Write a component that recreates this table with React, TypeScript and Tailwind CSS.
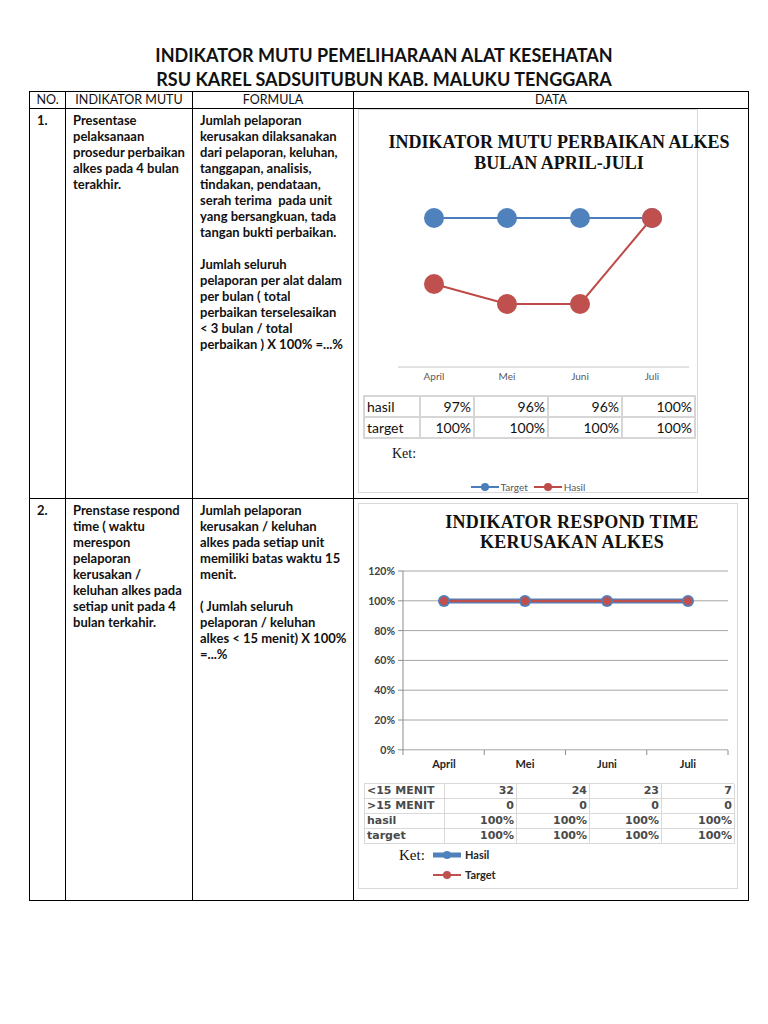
import React from "react";

const months = ["April", "Mei", "Juni", "Juli"];

function LegendMark({ color, thick }: { color: string; thick?: boolean }) {
  return (
    <svg width="28" height="10" className="block">
      <line x1="0" y1="5" x2="28" y2="5" stroke={color} strokeWidth={thick ? 5 : 2} />
      <circle cx="14" cy="5" r="4" fill={color} />
    </svg>
  );
}

function Chart1() {
  const bx = [75, 148, 221, 293];
  const red = [110, 130, 130, 44];
  return (
    <div className="w-[340px] h-[384px] border border-[#d9d9d9] bg-white">
      <div className="w-[400px] pt-[22px] text-center [font-family:'Liberation_Serif',serif] font-bold text-[18px] leading-[21px] text-[#111]">
        <div className="whitespace-nowrap">INDIKATOR MUTU PERBAIKAN ALKES</div>
        <div>BULAN APRIL-JULI</div>
      </div>
      <svg width="338" height="220" className="block">
        <line x1="39" y1="193" x2="330" y2="193" stroke="#d9d9d9" strokeWidth="1.5" />
        <polyline points={bx.map((x) => `${x},44`).join(" ")} fill="none" stroke="#4a7ebb" strokeWidth="2" />
        {bx.map((x) => (
          <circle key={"b" + x} cx={x} cy={44} r={10} fill="#4f81bd" />
        ))}
        <polyline points={bx.map((x, i) => `${x},${red[i]}`).join(" ")} fill="none" stroke="#be4b48" strokeWidth="2" />
        {bx.map((x, i) => (
          <circle key={"r" + x} cx={x} cy={red[i]} r={10} fill="#c0504d" />
        ))}
        {bx.map((x, i) => (
          <text key={"t" + x} x={x} y={206} textAnchor="middle" fontSize="10" fill="#595959" fontFamily="Lato, sans-serif">
            {months[i]}
          </text>
        ))}
      </svg>
      <div className="mt-[1px] ml-[4px] w-[333px] grid grid-cols-[56px_54px_74px_74px_73px] border-l-2 border-t-2 border-[#d6d6d6] text-[14px] leading-[19px] text-[#111]">
        {[
          ["hasil", "97%", "96%", "96%", "100%"],
          ["target", "100%", "100%", "100%", "100%"],
        ].map((row, ri) =>
          row.map((c, ci) => (
            <div
              key={ri + "-" + ci}
              className={
                ci === 0
                  ? "h-[21px] border-r-2 border-b-2 border-[#d6d6d6] pl-[2px]"
                  : "h-[21px] border-r-2 border-b-2 border-[#d6d6d6] pr-[2px] text-right"
              }
            >
              {c}
            </div>
          ))
        )}
      </div>
      <div className="mt-[5px] ml-[33px] h-[20px] [font-family:'Liberation_Serif',serif] text-[14px] leading-[20px] text-[#111]">
        Ket:
      </div>
      <div className="mt-[17px] flex justify-center items-center gap-[6px] text-[10px] leading-[12px] text-[#595959]">
        <div className="flex items-center gap-[2px]">
          <LegendMark color="#4a7ebb" />
          <span>Target</span>
        </div>
        <div className="flex items-center gap-[2px]">
          <LegendMark color="#be4b48" />
          <span>Hasil</span>
        </div>
      </div>
    </div>
  );
}

function Chart2() {
  const ys = [0, 1, 2, 3, 4, 5, 6].map((i) => 19 + i * 29.8);
  const labels = ["120%", "100%", "80%", "60%", "40%", "20%", "0%"];
  const ticks = [44, 125.25, 206.5, 287.75, 369];
  const cx = [85, 166, 248, 329];
  const rows = [
    ["<15 MENIT", "32", "24", "23", "7"],
    [">15 MENIT", "0", "0", "0", "0"],
    ["hasil", "100%", "100%", "100%", "100%"],
    ["target", "100%", "100%", "100%", "100%"],
  ];
  return (
    <div className="w-[380px] h-[386px] border border-[#d9d9d9] bg-white">
      <div className="pt-[8px] pl-[48px] text-center [font-family:'Liberation_Serif',serif] font-bold text-[18px] leading-[20px] tracking-[0.3px] text-[#111]">
        <div className="whitespace-nowrap">INDIKATOR RESPOND TIME</div>
        <div>KERUSAKAN ALKES</div>
      </div>
      <svg width="378" height="228" className="block">
        {ys.map((y, i) => (
          <g key={"g" + i}>
            <line x1="44" y1={y} x2="369" y2={y} stroke="#a6a6a6" strokeWidth="1" />
            <line x1="39" y1={y} x2="44" y2={y} stroke="#8c8c8c" strokeWidth="1" />
            <text x="36" y={y + 4} textAnchor="end" fontSize="10.5" fontWeight="bold" fill="#404040" fontFamily="Lato, sans-serif">
              {labels[i]}
            </text>
          </g>
        ))}
        <line x1="44" y1="19" x2="44" y2="198" stroke="#8c8c8c" strokeWidth="1" />
        {ticks.map((x) => (
          <line key={"t" + x} x1={x} y1="198" x2={x} y2="203" stroke="#8c8c8c" strokeWidth="1" />
        ))}
        <line x1={cx[0]} y1="49" x2={cx[3]} y2="49" stroke="#4f81bd" strokeWidth="5" />
        <line x1={cx[0]} y1="49" x2={cx[3]} y2="49" stroke="#c0504d" strokeWidth="2.5" />
        {cx.map((x) => (
          <g key={"m" + x}>
            <circle cx={x} cy="49" r="6" fill="#4f81bd" />
            <circle cx={x} cy="49" r="4.3" fill="#c0504d" />
          </g>
        ))}
        {cx.map((x, i) => (
          <text key={"x" + x} x={x} y="216" textAnchor="middle" fontSize="11" fontWeight="bold" fill="#262626" fontFamily="Lato, sans-serif">
            {months[i]}
          </text>
        ))}
      </svg>
      <div className="mt-[3px] ml-[5px] w-[370px] grid grid-cols-[80px_72px_73px_72px_73px] border-l border-t border-[#d9d9d9] [font-family:'DejaVu_Sans',sans-serif] font-bold text-[11px] leading-[14px] text-[#4a4a4a]">
        {rows.map((row, ri) =>
          row.map((c, ci) => (
            <div
              key={ri + "-" + ci}
              className={
                ci === 0
                  ? "h-[15px] border-r border-b border-[#d9d9d9] pl-[2px] whitespace-nowrap"
                  : "h-[15px] border-r border-b border-[#d9d9d9] pr-[2px] text-right"
              }
            >
              {c}
            </div>
          ))
        )}
      </div>
      <div className="flex items-center h-[20px] mt-[1px]">
        <div className="ml-[40px] w-[34px] [font-family:'Liberation_Serif',serif] text-[15px] leading-[20px] text-[#111]">Ket:</div>
        <LegendMark color="#4f81bd" thick />
        <span className="ml-[4px] text-[11px] font-bold text-[#262626]">Hasil</span>
      </div>
      <div className="flex items-center h-[20px]">
        <div className="ml-[74px]" />
        <LegendMark color="#c0504d" />
        <span className="ml-[4px] text-[11px] font-bold text-[#262626]">Target</span>
      </div>
    </div>
  );
}

export default function App() {
  const head = "border-r border-b border-black flex items-center justify-center text-[12.5px] leading-none text-[#111]";
  const cell = "border-r border-b border-black pl-[7px] pr-[1px] pt-[3px] text-[13px] leading-[16px] font-bold text-[#111] whitespace-nowrap";
  return (
    <div className="w-[768px] h-[1024px] bg-white text-black [font-family:Lato,sans-serif]">
      <div className="pt-[43px] text-center font-bold text-[18px] leading-[24px] text-[#111]">
        <div>INDIKATOR MUTU PEMELIHARAAN ALAT KESEHATAN</div>
        <div>RSU KAREL SADSUITUBUN KAB. MALUKU TENGGARA</div>
      </div>
      <div className="ml-[29px] w-[720px] grid grid-cols-[36px_127px_161px_395px] grid-rows-[17px_390px_402px] border-l border-t border-black">
        <div className={head}>NO.</div>
        <div className={head}>INDIKATOR MUTU</div>
        <div className={head}>FORMULA</div>
        <div className={head}>DATA</div>

        <div className={cell}>1.</div>
        <div className={cell}>
          <div>Presentase</div>
          <div>pelaksanaan</div>
          <div>prosedur perbaikan</div>
          <div>alkes pada 4 bulan</div>
          <div>terakhir.</div>
        </div>
        <div className={cell}>
          <div>Jumlah pelaporan</div>
          <div>kerusakan dilaksanakan</div>
          <div>dari pelaporan, keluhan,</div>
          <div>tanggapan, analisis,</div>
          <div>tindakan, pendataan,</div>
          <div>serah terima&nbsp; pada unit</div>
          <div>yang bersangkuan, tada</div>
          <div>tangan bukti perbaikan.</div>
          <div className="h-[16px]" />
          <div>Jumlah seluruh</div>
          <div>pelaporan per alat dalam</div>
          <div>per bulan ( total</div>
          <div>perbaikan terselesaikan</div>
          <div>&lt; 3 bulan / total</div>
          <div>perbaikan ) X 100% =...%</div>
        </div>
        <div className="border-r border-b border-black pl-[4px]">
          <Chart1 />
        </div>

        <div className={cell}>2.</div>
        <div className={cell}>
          <div>Prenstase respond</div>
          <div>time ( waktu</div>
          <div>merespon</div>
          <div>pelaporan</div>
          <div>kerusakan /</div>
          <div>keluhan alkes pada</div>
          <div>setiap unit pada 4</div>
          <div>bulan terkahir.</div>
        </div>
        <div className={cell}>
          <div>Jumlah pelaporan</div>
          <div>kerusakan / keluhan</div>
          <div>alkes pada setiap unit</div>
          <div>memiliki batas waktu 15</div>
          <div>menit.</div>
          <div className="h-[16px]" />
          <div>( Jumlah seluruh</div>
          <div>pelaporan / keluhan</div>
          <div>alkes &lt; 15 menit) X 100%</div>
          <div>=...%</div>
        </div>
        <div className="border-r border-b border-black pl-[4px] pt-[4px]">
          <Chart2 />
        </div>
      </div>
    </div>
  );
}
